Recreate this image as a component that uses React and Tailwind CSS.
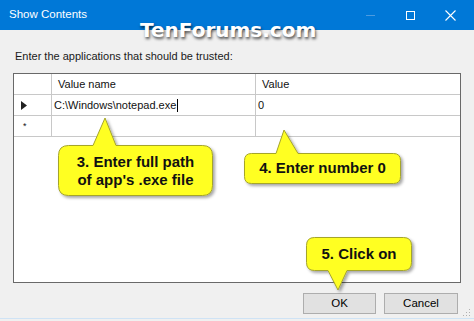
import React from "react";

function calloutPath(x1, y1, x2, y2, r, ptr) {
  let d = `M${x1 + r},${y1} `;
  if (ptr.side === "top") d += `L${ptr.a},${y1} L${ptr.tx},${ptr.ty} L${ptr.b},${y1} `;
  d += `L${x2 - r},${y1} Q${x2},${y1} ${x2},${y1 + r} L${x2},${y2 - r} Q${x2},${y2} ${x2 - r},${y2} `;
  if (ptr.side === "bottom") d += `L${ptr.b},${y2} L${ptr.tx},${ptr.ty} L${ptr.a},${y2} `;
  d += `L${x1 + r},${y2} Q${x1},${y2} ${x1},${y2 - r} L${x1},${y1 + r} Q${x1},${y1} ${x1 + r},${y1} Z`;
  return d;
}

export default function App() {
  const shapes = [
    calloutPath(58.5, 145.5, 212.5, 195.5, 10, { side: "top", a: 93, tx: 105, ty: 118, b: 116 }),
    calloutPath(244.5, 153.5, 400.5, 183.5, 7, { side: "top", a: 276, tx: 284, ty: 130, b: 298 }),
    calloutPath(306.5, 237.5, 411.5, 270.5, 8, { side: "bottom", a: 328, tx: 338, ty: 290, b: 347 }),
  ];
  return (
    <div
      className="relative w-[474px] h-[321px] overflow-hidden bg-[#f0f0f0] text-black"
      style={{ fontFamily: '"Liberation Sans", Arial, sans-serif' }}
    >
      {/* Title bar */}
      <div className="h-[30px] bg-[#0078d7] flex items-center pl-[9px] text-white text-[11.5px]">
        <span>Show Contents</span>
        <div className="ml-auto flex items-center h-full">
          <div className="w-[40px] flex justify-center">
            <div className="w-[9px] h-px bg-[#4c9be0]" />
          </div>
          <div className="w-[40px] flex justify-center">
            <div className="w-[9px] h-[9px] border border-white" />
          </div>
          <div className="w-[44px] flex justify-center pr-[4px]">
            <svg width="11" height="11" viewBox="0 0 11 11">
              <path d="M0.5 0.5 L10.5 10.5 M10.5 0.5 L0.5 10.5" stroke="white" strokeWidth="1.1" />
            </svg>
          </div>
        </div>
      </div>

      {/* Watermark */}
      <div
        className="absolute left-[140px] top-[20px] text-white font-bold text-[20px] leading-none"
        style={{ fontFamily: '"DejaVu Sans", Verdana, sans-serif', textShadow: "1px 2px 3px rgba(0,0,0,0.7)" }}
      >
        TenForums.com
      </div>

      <div className="pl-[15px] pt-[19px] text-[11px] leading-[14px] text-[#1a1a1a]">
        Enter the applications that should be trusted:
      </div>

      {/* Grid */}
      <div className="ml-[13px] mt-[10px] w-[448px] h-[210px] border border-[#696969] bg-white text-[11px] text-[#111]">
        <div className="grid grid-cols-[38px_204px_1fr]">
          <div className="h-[21px] border-r border-b border-[#c8c8c8]" />
          <div className="h-[21px] border-r border-b border-[#c8c8c8] pl-[6px] flex items-center">Value name</div>
          <div className="h-[21px] border-b border-[#c8c8c8] pl-[6px] flex items-center">Value</div>

          <div className="h-[21px] border-r border-b border-[#c8c8c8] flex items-center pl-[7px]">
            <svg width="6" height="9" viewBox="0 0 6 9"><path d="M0 0 L6 4.5 L0 9 Z" fill="#222" /></svg>
          </div>
          <div className="h-[21px] border-r border-b border-[#c8c8c8] pl-[2px] flex items-center">
            <span>C:\Windows\notepad.exe</span>
            <span className="w-px h-[13px] bg-black ml-px" />
          </div>
          <div className="h-[21px] border-b border-[#c8c8c8] pl-[2px] flex items-center">0</div>

          <div className="h-[21px] border-r border-b border-[#c8c8c8] flex items-center pl-[9px]">
            <span className="text-[9px] leading-none">*</span>
          </div>
          <div className="h-[21px] border-r border-b border-[#c8c8c8]" />
          <div className="h-[21px] border-b border-[#c8c8c8]" />
        </div>
      </div>

      {/* Buttons */}
      <div className="flex justify-end gap-[8px] mt-[10px] pr-[16px] text-[11.5px]">
        <div className="w-[73px] h-[21px] bg-[#e1e1e1] border border-[#adadad] flex items-center justify-center">OK</div>
        <div className="w-[74px] h-[21px] bg-[#e1e1e1] border border-[#adadad] flex items-center justify-center">Cancel</div>
      </div>
      <div className="absolute left-0 right-0 bottom-[2px] h-px bg-[#cfe3f5]" />
      {/* size grip */}
      <svg className="absolute left-[463px] top-[309px]" width="9" height="9" viewBox="0 0 9 9">
        <rect x="6" y="0" width="1" height="1" fill="#b0b0b0" />
        <rect x="3" y="3" width="1" height="1" fill="#b0b0b0" />
        <rect x="6" y="3" width="1" height="1" fill="#b0b0b0" />
        <rect x="0" y="6" width="1" height="1" fill="#b0b0b0" />
        <rect x="3" y="6" width="1" height="1" fill="#b0b0b0" />
        <rect x="6" y="6" width="1" height="1" fill="#b0b0b0" />
      </svg>

      {/* Callouts */}
      <svg className="absolute inset-0 pointer-events-none" width="474" height="321">
        <defs>
          <filter id="sh" x="-10%" y="-10%" width="130%" height="140%">
            <feDropShadow dx="2" dy="2" stdDeviation="1.5" floodColor="#000" floodOpacity="0.35" />
          </filter>
        </defs>
        {shapes.map((d, i) => (
          <path key={i} d={d} fill="#ffff24" stroke="#a5a52a" strokeWidth="1" filter="url(#sh)" />
        ))}
      </svg>
      <div className="absolute left-[58px] top-[145px] w-[155px] h-[51px] flex flex-col items-center justify-center font-bold text-[15px] leading-[18px] text-[#111]">
        <span>3. Enter full path</span>
        <span>of app's .exe file</span>
      </div>
      <div className="absolute left-[244px] top-[153px] w-[157px] h-[31px] flex items-center justify-center font-bold text-[15px] text-[#111]">
        4. Enter number 0
      </div>
      <div className="absolute left-[306px] top-[237px] w-[106px] h-[34px] flex items-center justify-center font-bold text-[15px] text-[#111]">
        5. Click on
      </div>
    </div>
  );
}
